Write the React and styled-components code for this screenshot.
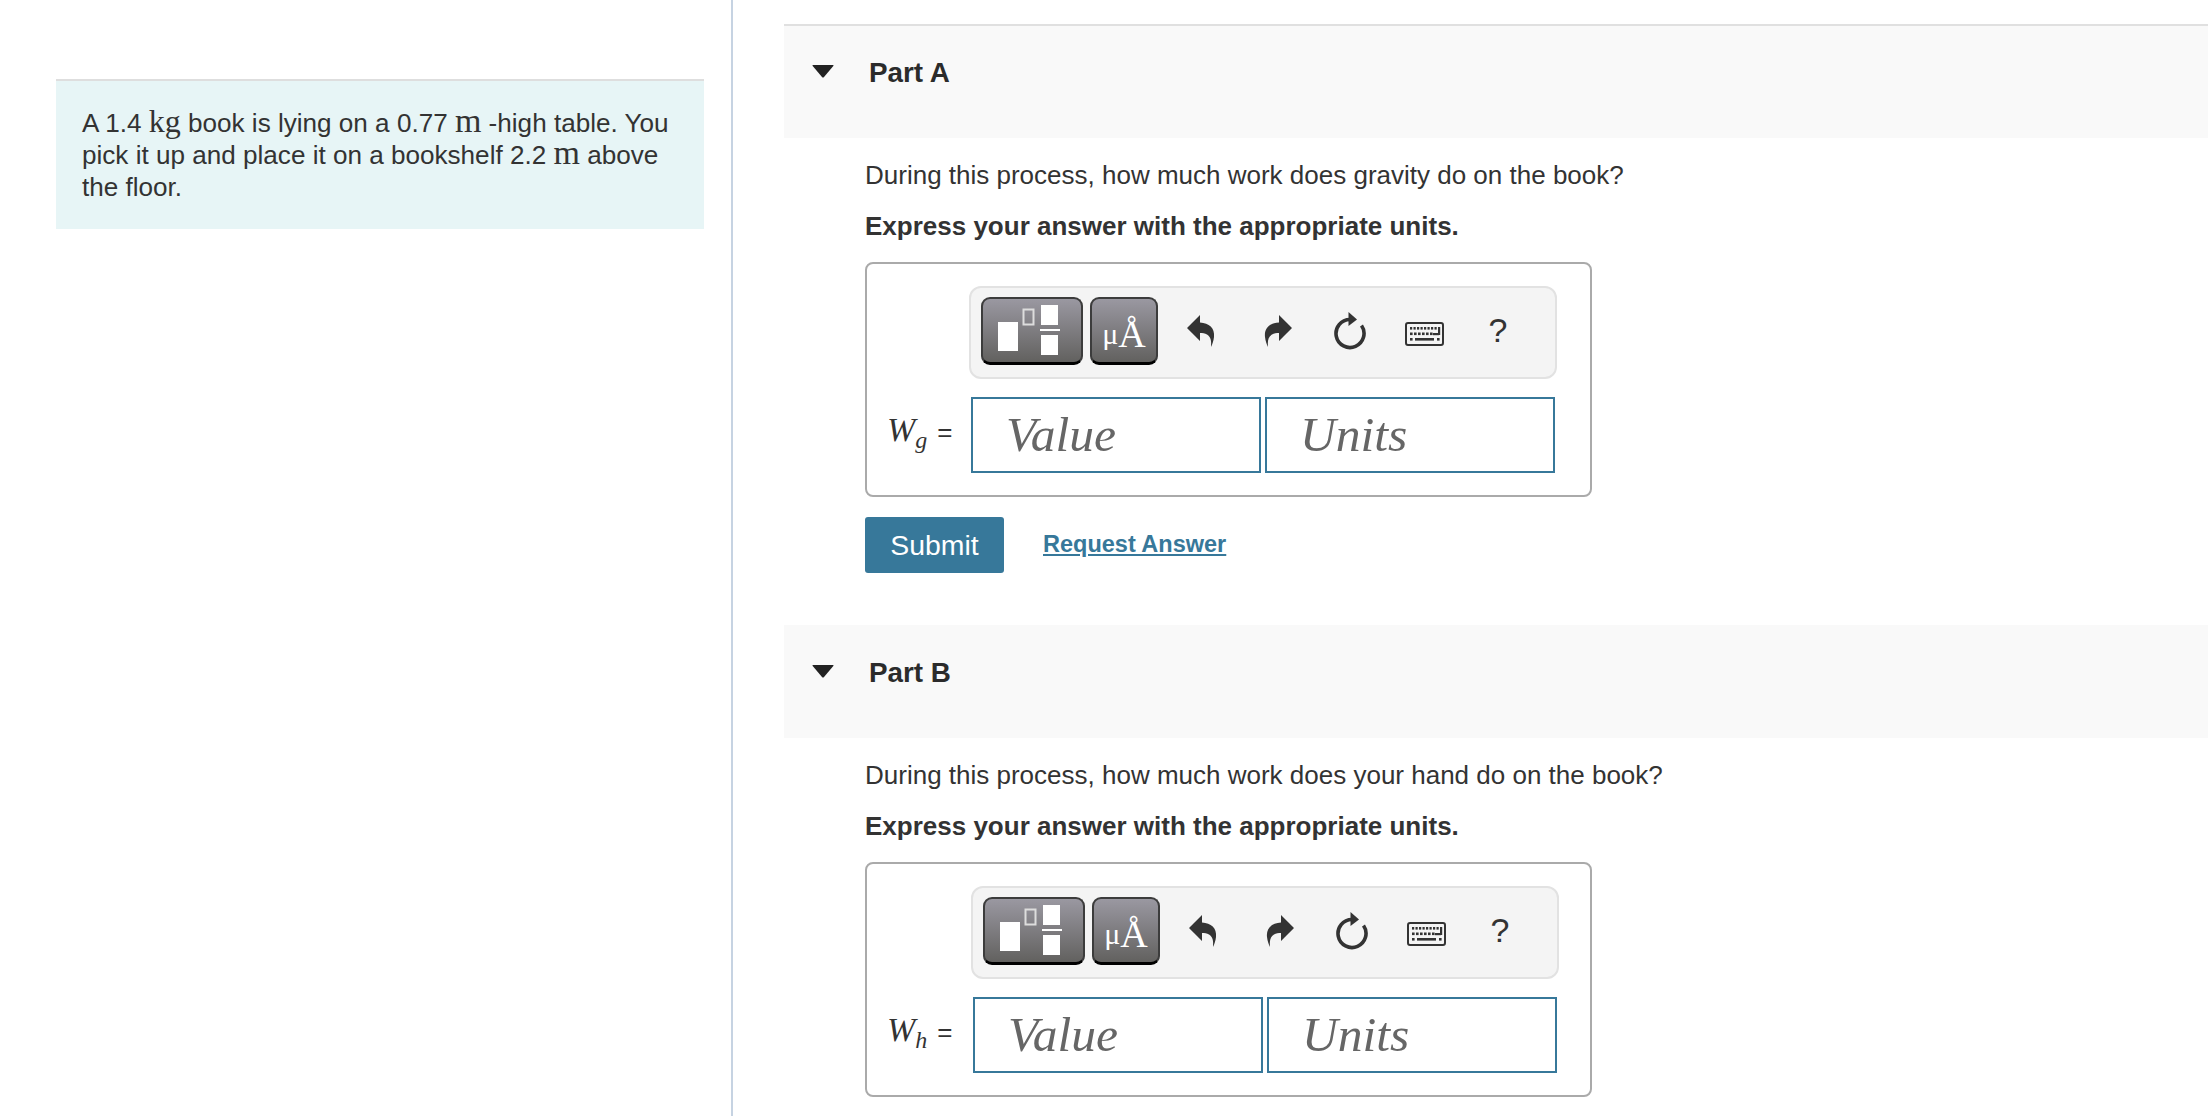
import React from "react";
import styled, { createGlobalStyle } from "styled-components";

const Global = createGlobalStyle`
  html, body { margin: 0; padding: 0; background: #fff; }
  body { font-family: "Liberation Sans", Arial, sans-serif; color: #333; overflow: hidden; }
`;
const Page = styled.div`
  display: flex;
  width: 2208px;
  height: 1116px;
  overflow: hidden;
`;
const Left = styled.aside`
  flex: none;
  box-sizing: content-box;
  width: 648px;
  padding: 79px 27px 0 56px;
  border-right: 2px solid #c6d3e2;
`;
const Intro = styled.div`
  background: #e7f5f6;
  border-top: 2px solid #dedede;
  padding: 26px 26px 26px;
  font-size: 26.1px;
  line-height: 32px;
  color: #333;
`;
const Unit = styled.span`
  font-family: "Liberation Serif", serif;
  font-size: ${(p) => p.$size}px;
  line-height: 20px;
`;
const Right = styled.main`
  flex: 1;
  min-width: 0;
  padding: 24px 0 0 51px;
`;
const Part = styled.section`
  margin-bottom: 52px;
`;
const PartHead = styled.header`
  height: ${(p) => (p.$ruled ? 112 : 113)}px;
  border-top: ${(p) => (p.$ruled ? "2px solid #e0e0e0" : "none")};
  background: #f9f9f9;
  display: flex;
  align-items: flex-start;
`;
const Caret = styled.svg`
  width: 22px;
  height: 13px;
  margin: ${(p) => (p.$ruled ? 39 : 40)}px 0 0 28px;
  flex: none;
`;
const PartTitle = styled.h2`
  margin: ${(p) => (p.$ruled ? 31 : 32)}px 0 0 35px;
  font-size: 27.8px;
  line-height: 32px;
  font-weight: 700;
  color: #2b2b2b;
`;
const PartBody = styled.div`
  padding-left: 81px;
`;
const Question = styled.p`
  margin: 21px 0 0;
  font-size: 26px;
  line-height: 32px;
  color: #333;
`;
const Hint = styled.p`
  margin: 19px 0 0;
  font-size: 26px;
  line-height: 32px;
  font-weight: 700;
  color: #333;
`;
const AnswerBox = styled.div`
  box-sizing: border-box;
  width: 727px;
  height: 235px;
  margin-top: 20px;
  border: 2px solid #aaa;
  border-radius: 8px;
  padding: 22px 0 0 20px;
`;
const Toolbar = styled.div`
  box-sizing: border-box;
  width: 588px;
  height: 93px;
  margin-left: ${(p) => p.$offset}px;
  border: 2px solid #e2e2e2;
  border-radius: 12px;
  background: #f4f4f4;
  padding: 9px 0 0 10px;
  display: flex;
  align-items: flex-start;
`;
const ToolButton = styled.div`
  box-sizing: border-box;
  width: ${(p) => p.$w}px;
  height: 68px;
  margin-right: 7px;
  padding-bottom: ${(p) => p.$lift || 0}px;
  flex: none;
  border: 2px solid #3c3c3c;
  border-bottom: 3px solid #000;
  border-radius: 9px;
  background: linear-gradient(#9a98a1, #62615f);
  color: #fff;
  font-family: "Liberation Serif", serif;
  display: flex;
  align-items: flex-end;
  justify-content: center;
  overflow: hidden;
`;
const Micro = styled.span`
  font-size: 30px;
  line-height: 46px;
`;
const Angstrom = styled.span`
  font-size: 38px;
  line-height: 46px;
`;
const ToolIcon = styled.div`
  width: 74px;
  height: 68px;
  flex: none;
  display: flex;
  align-items: center;
  justify-content: center;
  color: #333;
  box-sizing: border-box;
  padding: ${(p) => p.$drop || 0}px ${(p) => p.$pushLeft || 0}px ${(p) => p.$lift || 0}px ${(p) => p.$pushRight || 0}px;
`;
const HelpMark = styled.span`
  font-size: 34px;
  line-height: 68px;
  color: #333;
`;
const AnswerRow = styled.div`
  display: flex;
  align-items: stretch;
  margin-top: 18px;
  gap: 4px;
`;
const Symbol = styled.div`
  width: ${(p) => p.$w}px;
  flex: none;
  margin-right: -2px;
  display: flex;
  align-items: baseline;
  padding-top: 11px;
  box-sizing: border-box;
  font-family: "Liberation Serif", serif;
  font-style: italic;
  font-size: 34px;
  line-height: 44px;
  color: #333;
  sub {
    font-size: 24px;
    line-height: 0;
    vertical-align: baseline;
    position: relative;
    top: 7px;
  }
`;
const Equals = styled.span`
  font-family: "Liberation Sans", sans-serif;
  font-style: normal;
  font-size: 26px;
  margin-left: 10px;
`;
const Field = styled.div`
  box-sizing: border-box;
  width: 290px;
  height: 76px;
  border: 2px solid #37789a;
  padding-left: 33px;
  font-family: "Liberation Serif", serif;
  font-style: italic;
  font-size: 49.5px;
  line-height: 72px;
  color: #666;
`;
const Actions = styled.div`
  display: flex;
  align-items: center;
  margin-top: 20px;
`;
const Submit = styled.button`
  box-sizing: border-box;
  width: 139px;
  height: 56px;
  border: none;
  border-radius: 3px;
  background: #37789a;
  color: #fff;
  font-family: "Liberation Sans", sans-serif;
  font-size: 28.4px;
  padding: 0;
`;
const RequestLink = styled.a`
  margin: -2px 0 0 39px;
  font-size: 23.5px;
  font-weight: 700;
  color: #37789a;
  text-decoration: underline;
`;

const UndoIcon = ({ flip }) => (
  <svg width="28" height="32" viewBox="0 0 28 32" style={flip ? { transform: "scaleX(-1)" } : undefined}>
    <path fill="currentColor" d="M0 13 L13 0 V7.5 C22 8 28 13 27 22 C26.6 26 25 30 24 32 C24.5 26 24 22 20 19.5 C18 18.3 15.5 18 13 18 V26 Z" />
  </svg>
);
const RefreshIcon = () => (
  <svg width="34" height="38" viewBox="0 0 34 38">
    <path fill="none" stroke="currentColor" strokeWidth="3.6" d="M17 7.5 A14 14 0 1 0 28.5 13.5" />
    <path fill="currentColor" d="M15.5 0 L24 7.5 L15.5 14 Z" />
  </svg>
);
const KeyboardIcon = () => {
  const top = [5, 8.5, 12, 15.5, 19, 22.5, 26, 29.5];
  const mid = [5, 9, 13, 17, 21, 25];
  return (
    <svg width="39" height="24" viewBox="0 0 39 24">
      <rect x="1" y="1" width="37" height="22" rx="2" fill="#f4f4f4" stroke="currentColor" strokeWidth="2" />
      {top.map((x) => <rect key={x} x={x} y="5" width="2.2" height="2.6" fill="currentColor" />)}
      <rect x="33" y="5" width="2.2" height="8" fill="currentColor" />
      <rect x="28" y="11" width="6" height="2.2" fill="currentColor" />
      {mid.map((x) => <rect key={x} x={x} y="10.5" width="2.6" height="2.6" fill="currentColor" />)}
      <rect x="5" y="16" width="2.6" height="2.6" fill="currentColor" />
      <rect x="10" y="16" width="19" height="2.6" fill="currentColor" />
      <rect x="32" y="16" width="2.6" height="2.6" fill="currentColor" />
    </svg>
  );
};
const MatrixIcon = () => (
  <svg width="94" height="63" viewBox="2 2 94 63">
    <rect x="15" y="25" width="20" height="29" fill="#fff" />
    <rect x="40.5" y="12.5" width="10" height="15" fill="none" stroke="#ddd" strokeWidth="2" />
    <rect x="58" y="8" width="17" height="20" fill="#fff" />
    <rect x="57" y="32" width="20" height="2" fill="#fff" />
    <rect x="58" y="38" width="17" height="20" fill="#fff" />
  </svg>
);

const AnswerPart = ({ title, question, sub, labelWidth, ruled, showActions }) => (
  <Part>
    <PartHead $ruled={ruled}>
      <Caret $ruled={ruled} viewBox="0 0 22 13">
        <path fill="#222" d="M1 0 H21 Q22 0 21.3 1 L12 12 Q11 13 10 12 L0.7 1 Q0 0 1 0 Z" />
      </Caret>
      <PartTitle $ruled={ruled}>{title}</PartTitle>
    </PartHead>
    <PartBody>
      <Question>{question}</Question>
      <Hint>Express your answer with the appropriate units.</Hint>
      <AnswerBox>
        <Toolbar $offset={labelWidth - 1}>
          <ToolButton $w={102}><MatrixIcon /></ToolButton>
          <ToolButton $w={68} $lift={5}><Micro>μ</Micro><Angstrom>Å</Angstrom></ToolButton>
          <ToolIcon $pushLeft={3}><UndoIcon /></ToolIcon>
          <ToolIcon $pushRight={3}><UndoIcon flip /></ToolIcon>
          <ToolIcon><RefreshIcon /></ToolIcon>
          <ToolIcon $drop={6}><KeyboardIcon /></ToolIcon>
          <ToolIcon $lift={2}><HelpMark>?</HelpMark></ToolIcon>
        </Toolbar>
        <AnswerRow>
          <Symbol $w={labelWidth - 1}>W<sub>{sub}</sub><Equals>=</Equals></Symbol>
          <Field>Value</Field>
          <Field>Units</Field>
        </AnswerRow>
      </AnswerBox>
      {showActions && (
        <Actions>
          <Submit>Submit</Submit>
          <RequestLink href="#">Request Answer</RequestLink>
        </Actions>
      )}
    </PartBody>
  </Part>
);

export default function App() {
  return (
    <Page>
      <Global />
      <Left>
        <Intro>
          A 1.4 <Unit $size={32}>kg</Unit> book is lying on a 0.77 <Unit $size={34}>m</Unit> -high table. You pick it up and place it on a bookshelf 2.2 <Unit $size={34}>m</Unit> above the floor.
        </Intro>
      </Left>
      <Right>
        <AnswerPart ruled showActions title="Part A" sub="g" labelWidth={83}
          question="During this process, how much work does gravity do on the book?" />
        <AnswerPart title="Part B" sub="h" labelWidth={85}
          question="During this process, how much work does your hand do on the book?" />
      </Right>
    </Page>
  );
}
